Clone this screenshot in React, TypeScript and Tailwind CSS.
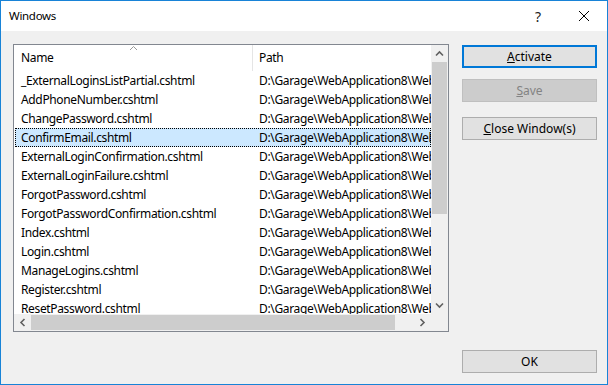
const files = [
  '_ExternalLoginsListPartial.cshtml',
  'AddPhoneNumber.cshtml',
  'ChangePassword.cshtml',
  'ConfirmEmail.cshtml',
  'ExternalLoginConfirmation.cshtml',
  'ExternalLoginFailure.cshtml',
  'ForgotPassword.cshtml',
  'ForgotPasswordConfirmation.cshtml',
  'Index.cshtml',
  'Login.cshtml',
  'ManageLogins.cshtml',
  'Register.cshtml',
  'ResetPassword.cshtml',
];

const path = 'D:\\Garage\\WebApplication8\\WebApplication8\\Views\\Account';

function Chevron({ dir }: { dir: 'up' | 'down' | 'left' | 'right' }) {
  const rot = { up: 0, right: 90, down: 180, left: 270 }[dir];
  return (
    <svg width="9" height="9" viewBox="0 0 9 9" style={{ transform: `rotate(${rot}deg)` }}>
      <path d="M1 6.5 L4.5 3 L8 6.5" fill="none" stroke="#606060" strokeWidth="1.6" />
    </svg>
  );
}

export default function App() {
  return (
    <div
      className="w-[608px] h-[385px] border border-[#1883d7] flex flex-col bg-white text-black text-[12px]"
      style={{ fontFamily: '"Segoe UI", "Noto Sans", sans-serif' }}
    >
      {/* title bar */}
      <div className="h-[30px] flex items-center bg-white shrink-0">
        <div className="flex-1 pl-[8px] pb-[1px] text-[11.5px] tracking-[-0.3px]">Windows</div>
        <div className="w-[46px] h-full flex items-center justify-center text-[14px] text-[#222]">?</div>
        <div className="w-[46px] h-full flex items-center justify-center">
          <svg width="10" height="10" viewBox="0 0 10 10">
            <path d="M0 0 L10 10 M10 0 L0 10" stroke="#000" strokeWidth="1" />
          </svg>
        </div>
      </div>

      {/* body */}
      <div className="flex-1 bg-[#f0f0f0] flex items-start gap-[13px] pl-[12px] pt-[13px] pb-[11px]">
        {/* list view */}
        <div className="w-[436px] h-[288px] border border-[#828790] bg-white flex flex-col">
          <div className="flex-1 flex min-h-0">
            <div className="flex-1 overflow-hidden tracking-[-0.35px]">
              <div className="h-[26px] flex items-center">
                <div className="relative w-[239px] h-full flex items-center pl-[7px] border-r border-[#e5e5e5]">
                  Name
                  <svg className="absolute left-[115px] top-0" width="9" height="6" viewBox="0 0 9 6">
                    <path d="M1 5 L4.5 1.5 L8 5" fill="none" stroke="#9a9a9a" strokeWidth="1" />
                  </svg>
                </div>
                <div className="pl-[6px]">Path</div>
              </div>
              {files.map((f, i) => (
                <div
                  key={f}
                  className={
                    i === 3
                      ? 'h-[19px] flex items-center bg-[#cce8ff] border border-dotted border-black ml-[1px] whitespace-nowrap'
                      : 'h-[19px] flex items-center whitespace-nowrap'
                  }
                >
                  <div className={i === 3 ? 'w-[237px] shrink-0 pl-[5px]' : 'w-[239px] shrink-0 pl-[7px]'}>{f}</div>
                  <div className="pl-[6px]">{path}</div>
                </div>
              ))}
            </div>
            {/* vertical scrollbar */}
            <div className="w-[17px] bg-[#f0f0f0] flex flex-col items-center">
              <div className="h-[17px] w-full flex items-center justify-center">
                <Chevron dir="up" />
              </div>
              <div className="w-[15px] h-[152px] bg-[#cdcdcd]" />
              <div className="flex-1" />
              <div className="h-[17px] w-full flex items-center justify-center">
                <Chevron dir="down" />
              </div>
            </div>
          </div>
          {/* horizontal scrollbar */}
          <div className="h-[17px] flex shrink-0">
            <div className="flex-1 bg-[#f0f0f0] flex items-center">
              <div className="w-[17px] h-full flex items-center justify-center">
                <Chevron dir="left" />
              </div>
              <div className="w-[364px] h-[15px] bg-[#cdcdcd]" />
              <div className="flex-1" />
              <div className="w-[17px] h-full flex items-center justify-center">
                <Chevron dir="right" />
              </div>
            </div>
            <div className="w-[17px] bg-[#f0f0f0]" />
          </div>
        </div>

        {/* buttons */}
        <div className="w-[135px] self-stretch flex flex-col pt-[1px]">
          <button className="h-[23px] bg-[#e1e1e1] border-2 border-[#0078d7]">
            <u>A</u>ctivate
          </button>
          <button className="h-[23px] mt-[11px] bg-[#cccccc] border border-[#bfbfbf] text-[#838383]">
            <u>S</u>ave
          </button>
          <button className="h-[23px] mt-[15px] bg-[#e1e1e1] border border-[#adadad]">
            <u>C</u>lose Window(s)
          </button>
          <button className="h-[23px] mt-auto bg-[#e1e1e1] border border-[#adadad]">OK</button>
        </div>
      </div>
    </div>
  );
}
